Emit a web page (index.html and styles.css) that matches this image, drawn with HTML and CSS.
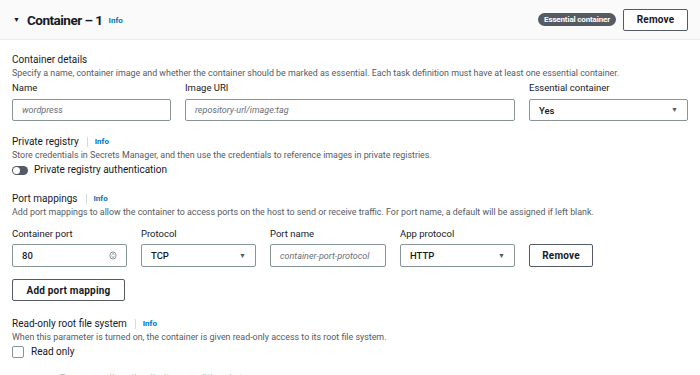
FILE: index.html
```html
<!DOCTYPE html>
<html lang="en">
<head>
    <meta charset="UTF-8">
    <title>Container - 1</title>
    <link rel="stylesheet" href="styles.css">
</head>
<body>
<div class="panel">
    <div class="panel-head">
        <div class="head-left">
            <span class="caret">&#9660;</span>
            <span class="panel-title">Container – 1</span>
            <a class="info">Info</a>
        </div>
        <div class="head-right">
            <span class="badge">Essential container</span>
            <button class="btn btn-head">Remove</button>
        </div>
    </div>

    <div class="panel-body">
        <div class="section sec-details">
            <div class="sec-title">Container details</div>
            <div class="sec-desc">Specify a name, container image and whether the container should be marked as essential. Each task definition must have at least one essential container.</div>
            <div class="row row-details">
                <div class="field">
                    <label>Name</label>
                    <div class="input placeholder">wordpress</div>
                </div>
                <div class="field">
                    <label>Image URI</label>
                    <div class="input placeholder">repository-url/image:tag</div>
                </div>
                <div class="field">
                    <label>Essential container</label>
                    <div class="input select">Yes <span class="arrow">&#9660;</span></div>
                </div>
            </div>
        </div>

        <div class="section sec-registry">
            <div class="sec-title">Private registry <span class="sep"></span> <a class="info">Info</a></div>
            <div class="sec-desc">Store credentials in Secrets Manager, and then use the credentials to reference images in private registries.</div>
            <div class="toggle-row">
                <span class="toggle"><span class="knob"></span></span>
                Private registry authentication
            </div>
        </div>

        <div class="section sec-ports">
            <div class="sec-title">Port mappings <span class="sep"></span> <a class="info">Info</a></div>
            <div class="sec-desc">Add port mappings to allow the container to access ports on the host to send or receive traffic. For port name, a default will be assigned if left blank.</div>
            <div class="row row-ports">
                <div class="field">
                    <label>Container port</label>
                    <div class="input select">80
                        <svg class="stepper" viewBox="0 0 10 10"><rect x="1.2" y="0.6" width="7.6" height="8.8" rx="3.8"/><polyline points="3.3 4, 5 2.5, 6.7 4"/><polyline points="3.3 6, 5 7.5, 6.7 6"/></svg>
                    </div>
                </div>
                <div class="field">
                    <label>Protocol</label>
                    <div class="input select">TCP <span class="arrow">&#9660;</span></div>
                </div>
                <div class="field">
                    <label>Port name</label>
                    <div class="input placeholder">container-port-protocol</div>
                </div>
                <div class="field">
                    <label>App protocol</label>
                    <div class="input select">HTTP <span class="arrow">&#9660;</span></div>
                </div>
                <div class="field field-btn">
                    <button class="btn btn-row">Remove</button>
                </div>
            </div>
            <button class="btn btn-add">Add port mapping</button>
        </div>

        <div class="section sec-readonly">
            <div class="sec-title">Read-only root file system <span class="sep"></span> <a class="info">Info</a></div>
            <div class="sec-desc">When this parameter is turned on, the container is given read-only access to its root file system.</div>
            <div class="check-row">
                <span class="checkbox"></span>
                Read only
            </div>
        </div>

        <div class="section sec-limits">
            <div class="sec-title faded">Resource allocation limits - conditional <span class="sep"></span></div>
        </div>
    </div>
</div>
</body>
</html>
```

FILE: styles.css
```css
body {
    margin: 0;
    background-color: #fff;
    font-family: Roboto, "Liberation Sans", sans-serif;
    color: #16191f;
    overflow: hidden;
    height: 375px;
}

.panel-head {
    height: 40px;
    box-sizing: border-box;
    background-color: #fafafa;
    border-bottom: 1px solid #eaeded;
    display: flex;
    justify-content: space-between;
    align-items: center;
    padding: 0 12px 0 13px;
}

.head-left {
    display: flex;
    align-items: center;
}

.caret {
    font-size: 7px;
    margin-right: 7px;
    margin-top: 1px;
}

.panel-title {
    font-size: 13.5px;
    font-weight: 700;
    letter-spacing: -0.5px;
}

.info {
    color: #0073bb;
    font-size: 8px;
    font-weight: 700;
    margin-left: 6px;
    margin-top: 2px;
}

.head-right {
    display: flex;
    align-items: center;
}

.badge {
    background-color: #545b64;
    color: #fff;
    font-size: 8px;
    font-weight: 700;
    height: 13px;
    line-height: 13px;
    padding: 0 6px;
    border-radius: 7px;
    letter-spacing: -0.15px;
}

.btn {
    background-color: #fff;
    border: 1px solid #545b64;
    border-radius: 2px;
    font-family: inherit;
    font-size: 10px;
    font-weight: 700;
    color: #16191f;
    cursor: pointer;
    padding: 0;
    letter-spacing: 0.2px;
}

.btn-head {
    width: 65px;
    height: 22px;
    margin-left: 7px;
}

.panel-body {
    padding: 0 12px;
}

.sec-title {
    font-size: 10px;
    line-height: 13px;
    display: flex;
    align-items: center;
}

.sec-title .info {
    margin: 0;
}

.sep {
    display: inline-block;
    width: 1px;
    height: 10px;
    background-color: #d5dbdb;
    margin: 0 7px 0 8px;
}

.sec-desc {
    font-size: 8.9px;
    line-height: 12px;
    color: #545b64;
    margin-top: 1px;
    white-space: nowrap;
}

.sec-details {
    padding-top: 13px;
}

.row {
    display: grid;
    column-gap: 14px;
    margin-top: 3px;
}

.row-details {
    grid-template-columns: 159px 1fr 159px;
}

.row-ports {
    grid-template-columns: 115px 115px 116px 115px 64px;
    margin-top: 10px;
}

.field {
    display: flex;
    flex-direction: column;
}

.field label {
    font-size: 9.5px;
    line-height: 12px;
    margin-bottom: 5px;
}

.row-ports .field label {
    margin-bottom: 4px;
}

.field-btn {
    justify-content: flex-end;
}

.input {
    height: 22px;
    box-sizing: border-box;
    border: 1px solid #879596;
    border-radius: 2px;
    font-size: 9.5px;
    font-weight: 500;
    padding: 0 9px;
    display: flex;
    align-items: center;
}

.row-ports .input {
    height: 23px;
}

.placeholder {
    font-style: italic;
    font-weight: 400;
    font-size: 9px;
    color: #687078;
}

.select {
    justify-content: space-between;
}

.arrow {
    font-size: 7px;
    color: #545b64;
}

.stepper {
    width: 8px;
    height: 9px;
    fill: none;
    stroke: #545b64;
    stroke-width: 0.8;
}

.btn-row {
    height: 23px;
    width: 64px;
}

.sec-registry {
    padding-top: 14px;
}

.toggle-row, .check-row {
    display: flex;
    align-items: center;
    font-size: 10px;
    line-height: 14px;
    margin-top: 2px;
}

.toggle {
    width: 16px;
    height: 9px;
    border-radius: 5px;
    background-color: #545b64;
    margin-right: 6px;
    display: flex;
    align-items: center;
    padding-left: 1px;
    box-sizing: border-box;
}

.knob {
    width: 7px;
    height: 7px;
    border-radius: 50%;
    background-color: #fff;
}

.sec-ports {
    padding-top: 15px;
}

.btn-add {
    display: block;
    width: 113px;
    height: 22px;
    margin-top: 12px;
}

.sec-readonly {
    padding-top: 16px;
}

.checkbox {
    width: 10px;
    height: 10px;
    border: 1px solid #879596;
    border-radius: 2px;
    margin-right: 7px;
}

.sec-limits {
    padding-top: 13px;
    padding-left: 48px;
}

.faded {
    color: #aab7b8;
}
```
